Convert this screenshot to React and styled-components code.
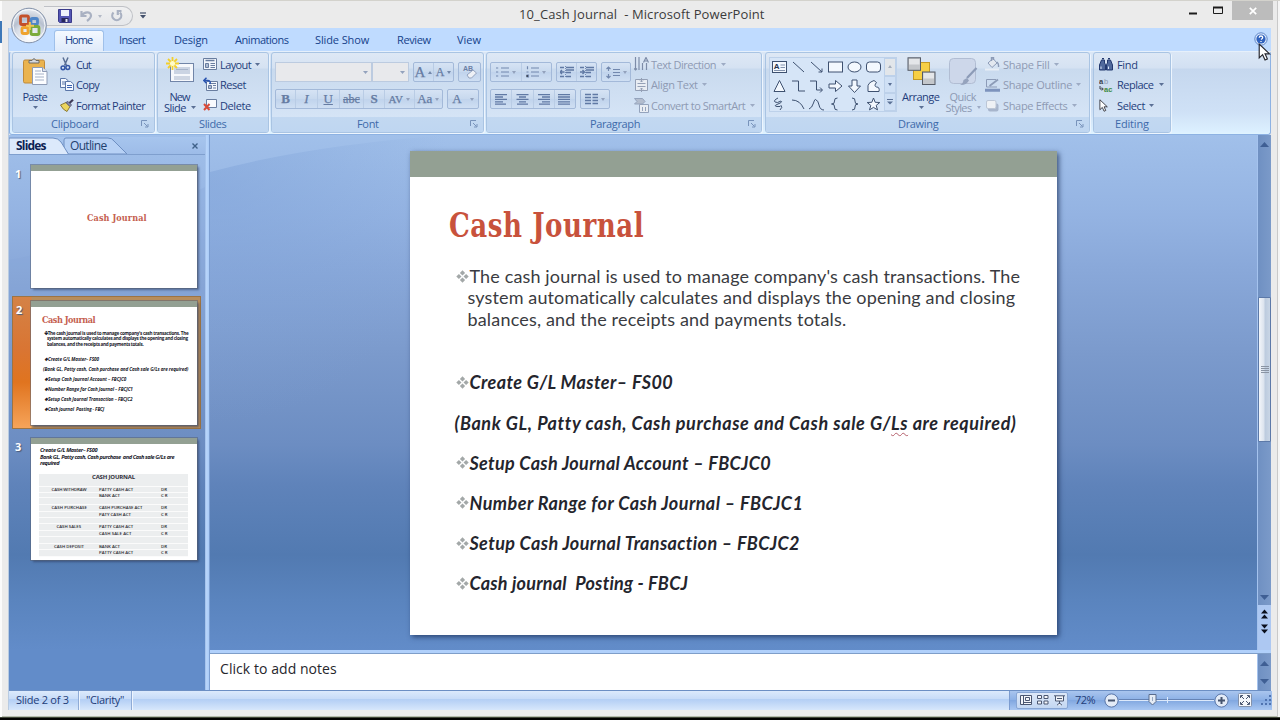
import { useLayoutEffect, useRef, useState } from "react"
import styled, { createGlobalStyle, css } from "styled-components"

const GlobalStyle = createGlobalStyle`
    * { box-sizing:border-box; }
    body {
        margin:0;
        overflow:hidden;
        background-color:#ebebeb;
        font-family:"Open Sans","Noto Sans",sans-serif;
    }
    svg { display:block; flex:none; }
`

/* ---------- text that keeps a fixed run length ---------- */
const Run = styled.span`
    display:inline-block;
    white-space:pre;
    flex:none;
`
const Fit = ({ w, children, className }) => {
    const ref = useRef(null)
    const [spacing, setSpacing] = useState(null)
    useLayoutEffect(() => {
        const el = ref.current
        const count = el.textContent.length
        setSpacing((w - el.offsetWidth) / Math.max(1, count - 1))
    }, [w])
    const style = spacing === null ? undefined : { width: w, letterSpacing: spacing }
    return <Run ref={ref} className={className} style={style}>{children}</Run>
}

/* ---------- window ---------- */
const Window = styled.div`
    position:relative;
    width:1280px;
    height:720px;
    display:flex;
    flex-direction:column;
    overflow:hidden;
    background-color:#ebebeb;
    border-top:1px solid #d3d2cc;
`
const TitleBar = styled.div`
    height:27px;
    flex:none;
    display:flex;
    align-items:flex-start;
    padding-left:44px;
`
const QuickAccess = styled.div`
    width:89px;
    height:20px;
    margin-top:5px;
    padding-left:14px;
    display:flex;
    align-items:center;
    border:1px solid #bfc1c6;
    border-left:none;
    border-radius:0 10px 10px 0;
    background:linear-gradient(#f0f0f1,#e6e7ea);
`
const Customize = styled.div`
    margin:11px 0 0 7px;
`
const Caption = styled.div`
    margin-left:373px;
    width:670px;
    font-size:13px;
    line-height:27px;
    color:#3b3b3b;
`
const WinButtons = styled.div`
    display:flex;
    align-items:flex-start;
`
const Close = styled.div`
    width:41px;
    height:19px;
    margin-left:8px;
    background-color:#bcbcbc;
    display:flex;
    align-items:center;
    justify-content:center;
`
const Orb = styled.div`
    position:absolute;
    left:11px;
    top:6px;
`
const Frame = styled.div`
    flex:none;
    height:682px;
    margin:0 9px 0 8px;
    display:flex;
    flex-direction:column;
    border-left:1px solid #b8cbe2;
`

/* ---------- ribbon ---------- */
const Tabs = styled.div`
    height:23px;
    flex:none;
    display:flex;
    padding:2px 0 0 45px;
    background-color:#bfdbff;
    font-size:11px;
    color:#15428b;
`
const Tab = styled.div`
    height:21px;
    line-height:20px;
    margin-left:${p => p.$gap}px;
    ${p => p.$active && css`
        width:50px;
        padding-left:10px;
        border:1px solid #9fc0ea;
        border-bottom:none;
        border-radius:3px 3px 0 0;
        background:linear-gradient(#f4f9ff,#dfeafa);
        line-height:18px;
    `}
`
const Help = styled.div`
    position:absolute;
    left:1254px;
    top:31px;
`
const Ribbon = styled.div`
    height:84px;
    flex:none;
    display:flex;
    gap:2px;
    padding:0 0 0 2px;
    border:1px solid #8db2e3;
    border-top-color:#e6f0fb;
    border-radius:3px;
    background:linear-gradient(#dbe7f6 0,#d2e0f2 16px,#c5d7ee 17px,#cfe1f6 60px,#dcf0ff 80px,#e0f4ff 100%);
    font-size:11px;
    color:#1e3d7b;
`
const Group = styled.div`
    width:${p => p.$w}px;
    margin-right:${p => p.$mr || 0}px;
    height:81px;
    flex:none;
    border:1px solid #a9c4e3;
    border-radius:3px;
    box-shadow:1px 1px 0 #edf5fe;
    display:flex;
    flex-direction:column;
    background:linear-gradient(#dee8f5 0,#d5e2f2 15px,#c9daee 16px,#d5e4f6 64px);
    overflow:hidden;
`
const GroupBody = styled.div`
    height:64px;
    flex:none;
    display:flex;
`
const GroupTitle = styled.div`
    height:15px;
    flex:none;
    display:flex;
    align-items:flex-start;
    justify-content:space-between;
    padding:0 5px 0 ${p => p.$x}px;
    background:linear-gradient(#c2d8f1,#bfd6f1);
    color:#3e6aaa;
    line-height:14px;
    svg { margin-top:3px; }
`
const Big = styled.div`
    width:${p => p.$w}px;
    margin-left:${p => p.$ml}px;
    padding-top:4px;
    flex:none;
    display:flex;
    flex-direction:column;
    align-items:center;
    color:${p => p.$off ? "#8c99b3" : "inherit"};
    line-height:11px;
`
const BigIcon = styled.div`
    height:34px;
`
const BigLine = styled.div`
    height:11px;
    display:flex;
    align-items:center;
    gap:4px;
`
const Column = styled.div`
    margin-left:${p => p.$ml}px;
    padding-top:1px;
    flex:none;
`
const Command = styled.div`
    height:20.5px;
    display:flex;
    align-items:center;
    color:${p => p.$off ? "#8e9ab3" : "inherit"};
`
const Slot = styled.div`
    width:${p => p.$w}px;
    flex:none;
`
const ToolRows = styled.div`
    margin-left:3px;
    padding-top:9px;
    display:flex;
    flex-direction:column;
    gap:7px;
    flex:none;
`
const ToolRow = styled.div`
    display:flex;
    height:20px;
    gap:4px;
`
const Combo = styled.div`
    width:${p => p.$w}px;
    margin-right:${p => p.$tight ? -4 : 0}px;
    height:20px;
    border:1px solid #bccbe0;
    background-color:#e8e9ec;
    display:flex;
    align-items:center;
    justify-content:flex-end;
    padding-right:3px;
`
const ToolSet = styled.div`
    width:${p => p.$w}px;
    height:20px;
    border:1px solid #a3b9d9;
    border-radius:2px;
    background:linear-gradient(#d6e3f4,#c8d9ee 48%,#c0d3ec 50%,#cfdff3);
    display:flex;
`
const Tool = styled.div`
    flex:${p => p.$grow || 1};
    display:flex;
    align-items:center;
    justify-content:center;
    gap:3px;
    font-family:"Liberation Serif",serif;
    font-size:${p => p.$size || 13}px;
    font-weight:${p => p.$plain ? 400 : 700};
    font-style:${p => p.$italic ? "italic" : "normal"};
    text-decoration:${p => p.$line || "none"};
    line-height:18px;
    color:#667ca3;
    -webkit-text-stroke:.25px #667ca3;
    & + & { border-left:1px solid #b9cce5; }
`
const Gallery = styled.div`
    width:128px;
    height:55px;
    margin:4px 0 0 3px;
    flex:none;
    display:flex;
    border:1px solid #bdd1ea;
    background-color:#d6e5f7;
`
const Shapes = styled.div`
    width:114px;
    display:grid;
    grid-template-columns:repeat(6,18.8px);
    grid-template-rows:repeat(3,18.4px);
    align-items:center;
    justify-items:center;
`
const GalleryBar = styled.div`
    width:12px;
    display:flex;
    flex-direction:column;
`
const GalleryButton = styled.div`
    flex:1;
    display:flex;
    align-items:center;
    justify-content:center;
    border:1px solid #bdd1ea;
    background-color:${p => p.$off ? "#e2e6ea" : "#cfe0f5"};
`

/* ---------- work area ---------- */
const Work = styled.div`
    height:555px;
    flex:none;
    display:flex;
`
const backdrop = "linear-gradient(#a1c0ea 0,#94b3e2 80px,#8aa9da 130px,#7b9acc 220px,#6c8dc2 310px,#5f83ba 350px,#527ab1 420px,#5a84be 465px,#628cc9 515px,#628cc9 100%)"
const Side = styled.div`
    width:196px;
    flex:none;
    padding-top:2px;
    background:${backdrop};
    position:relative;
`
const Sheen = styled.svg`
    position:absolute;
    left:0;
    top:0;
`
const SideTabs = styled.div`
    height:18px;
    display:flex;
    align-items:center;
    position:relative;
    border-bottom:1px solid #7f9fce;
    background:linear-gradient(#a7c5ee,#9dbce8);
    font-size:12px;
    color:#1b3262;
`
const SideTab = styled.div`
    position:relative;
    line-height:17px;
    margin-left:${p => p.$ml}px;
    font-weight:${p => p.$bold ? 700 : 400};
    color:${p => p.$bold ? "#0d1f52" : "#23406f"};
`
const SideClose = styled.div`
    margin-left:85px;
    position:relative;
`
const Item = styled.div`
    position:relative;
    width:189px;
    height:${p => p.$h}px;
    margin:${p => p.$mt}px 0 0 3px;
    padding-top:4px;
    display:flex;
    ${p => p.$on && css`
        border:1px solid #9d7443;
        background:linear-gradient(90deg,transparent 18px,#b78d5c 19px),linear-gradient(#d48246,#d97533 40%,#e0741f 65%,#f6a45a);
    `}
`
const Index = styled.div`
    width:${p => p.$w}px;
    padding:2px 0 0 3px;
    font-size:11px;
    line-height:13px;
    font-weight:700;
    color:#fff;
    text-shadow:1px 1px 1px #4c5b78;
`
const Thumb = styled.div`
    width:166px;
    height:${p => p.$h}px;
    background-color:#fff;
    border-top:${p => p.$bar}px solid #93a093;
    box-shadow:0 0 0 1px rgba(90,100,120,.55),2px 2px 2px rgba(40,55,90,.55);
    overflow:hidden;
`
const ThumbTitle = styled.div`
    margin:${p => p.$m};
    height:12px;
    line-height:12px;
    font-family:"DejaVu Serif Condensed","DejaVu Serif",serif;
    font-weight:700;
    font-size:9px;
    color:#c5604f;
`
const ThumbLine = styled.div`
    height:${p => p.$h}px;
    margin-left:${p => p.$x}px;
    display:flex;
    align-items:center;
    font-size:${p => p.$size || 4.6}px;
    line-height:${p => p.$h}px;
    font-weight:700;
    font-style:${p => p.$plain ? "normal" : "italic"};
    color:#20202a;
`
const MiniTable = styled.div`
    width:149px;
    margin:7px 0 0 8px;
`
const MiniRow = styled.div`
    height:${p => p.$h}px;
    display:grid;
    grid-template-columns:60px 62px 27px;
    align-items:center;
    justify-items:start;
    border-bottom:.5px solid #fbfbfb;
    background-color:#eceeef;
    font-size:4.3px;
    font-weight:600;
    line-height:5px;
    color:#26262c;
    & > *:nth-child(1) { justify-self:center; }
`
const MiniHead = styled.div`
    height:6.5px;
    display:flex;
    justify-content:center;
    align-items:center;
    background-color:#eceeef;
    font-size:6px;
    font-weight:700;
    line-height:6px;
    color:#30303a;
`
const Splitter = styled.div`
    width:5px;
    flex:none;
    background:linear-gradient(90deg,#9dbce6,#b9d5fb 40%,#a9cbf7);
    border-right:1px solid #7d9fd2;
`
const Main = styled.div`
    width:1061px;
    flex:none;
    display:flex;
    flex-direction:column;
`
const Stage = styled.div`
    position:relative;
    height:515px;
    flex:none;
    display:flex;
    background:${backdrop};
`
const Canvas = styled.div`
    width:1047px;
    padding:16px 0 0 200px;
`
const Slide = styled.div`
    position:relative;
    width:647px;
    height:484px;
    background-color:#fff;
    border-top:26px solid #93a093;
    box-shadow:2px 2px 5px rgba(20,40,80,.7);
    font-family:Lato,"Open Sans",sans-serif;
    font-size:18px;
    font-variant-ligatures:none;
    color:#3a3b41;
`
const Heading = styled.h1`
    margin:0;
    padding:28px 0 0 39px;
    height:88.5px;
    font-family:"DejaVu Serif Condensed","DejaVu Serif",serif;
    font-weight:700;
    font-size:33px;
    line-height:41px;
    color:#c8523c;
`
const Squeezed = styled.span`
    display:inline-block;
    transform:scaleX(.88);
    transform-origin:0 50%;
`
const Line = styled.div`
    height:21.6px;
    line-height:21.6px;
    margin-left:${p => p.$x}px;
    display:flex;
    align-items:center;
`
const Point = styled.div`
    height:40.2px;
    line-height:40px;
    margin-left:${p => p.$x}px;
    display:flex;
    align-items:center;
    font-weight:700;
    font-style:italic;
    color:#24252d;
`
const Points = styled.div`
    margin-top:32px;
`
const Misspelt = styled.span`
    text-decoration:underline wavy #b5606c 1px;
    text-underline-offset:2px;
    text-decoration-skip-ink:none;
`
const Scroll = styled.div`
    width:14px;
    height:${p => p.$h}px;
    flex:none;
    display:flex;
    flex-direction:column;
    align-items:center;
    border-left:1px solid #a5c3ee;
    background:linear-gradient(90deg,#6f90c2,#7b9ac9);
`
const ScrollEnd = styled.div`
    height:${p => p.$h}px;
    display:flex;
    align-items:center;
`
const ScrollThumb = styled.div`
    width:13px;
    height:145px;
    margin:${p => p.$mt}px 0 ${p => p.$mb}px;
    display:flex;
    align-items:center;
    justify-content:center;
    border:1px solid #5c79a8;
    border-radius:1px;
    background:linear-gradient(90deg,#f3f6fa,#dbe3ee 45%,#bccbde 55%,#c9d6e6);
`
const Jumps = styled.div`
    width:13px;
    flex:1;
    padding-top:4px;
    display:flex;
    flex-direction:column;
    align-items:center;
    gap:5px;
    background-color:#adc8f2;
`
const NotesSplit = styled.div`
    height:4px;
    flex:none;
    background-color:#b0d0fb;
    border-bottom:1px solid #7e9ec9;
`
const NotesRow = styled.div`
    height:36px;
    flex:none;
    display:flex;
`
const Notes = styled.div`
    width:1047px;
    padding-left:10px;
    background-color:#fff;
    font-size:14px;
    line-height:30px;
    color:#26262c;
`

/* ---------- status bar ---------- */
const Status = styled.div`
    height:20px;
    flex:none;
    display:flex;
    border-top:1px solid #6c8fc4;
    background:linear-gradient(#dceafc,#c8dcf8 40%,#b4cff5 45%,#d7e7fb);
    font-size:11px;
    line-height:18px;
    color:#233d78;
`
const Field = styled.div`
    width:${p => p.$w}px;
    flex:none;
    padding-left:7px;
    border-right:1px solid #8fabd6;
    box-shadow:1px 0 0 #edf4fe;
`
const Spacer = styled.div`
    width:${p => p.$w}px;
    flex:none;
`
const Zoom = styled.div`
    flex:1;
    display:flex;
    align-items:center;
    padding:0 0 1px 6px;
    border-left:1px solid #7c9cd0;
    background:linear-gradient(#a9c5ee,#8db1e6 45%,#82a8e0 50%,#a9c7f2);
`
const Views = styled.div`
    width:52px;
    height:17px;
    flex:none;
    display:flex;
    align-items:center;
    justify-content:space-around;
    border:1px solid #88a6d4;
    border-radius:2px;
    background:linear-gradient(#dde8f8,#c3d7f2);
`
const Bottom = styled.div`
    height:10px;
    flex:none;
    background:linear-gradient(#ebebeb 6px,#7f8b70 7px,#000 8px);
`
const LeftEdge = styled.div`
    position:absolute;
    left:0;
    top:0;
    width:2px;
    height:716px;
    background:linear-gradient(#fbfbfb 20px,#3d78b8 20px,#3d78b8 42px,#fbfbfb 42px);
`
const RightEdge = styled.div`
    position:absolute;
    right:0;
    top:0;
    width:3px;
    height:716px;
    border-left:1px solid #c9c9c9;
    background-color:#f5f5f5;
`
const Pointer = styled.div`
    position:absolute;
    left:1258px;
    top:42px;
`

/* ---------- glyphs ---------- */
const Caret = ({ c = "#5b7095", up, s = 5 }) => (
    <svg width={s} height={3} viewBox="0 0 6 3" preserveAspectRatio="none"><path d={up ? "M0 3h6L3 0z" : "M0 0h6L3 3z"} fill={c} /></svg>
)
const Arrow = ({ up }) => (
    <svg width="9" height="5" viewBox="0 0 9 5"><path d={up ? "M0 5h9L4.5 0z" : "M0 0h9L4.5 5z"} fill="#3f5f94" /></svg>
)
const Launcher = () => (
    <svg width="8" height="8" viewBox="0 0 8 8" fill="none" stroke="#7893bb">
        <path d="M.5 6V.5H6" /><path d="M3 3l3.500 3.500M7 4v3H4" />
    </svg>
)
const Jump = ({ up }) => (
    <svg width="7" height="10" viewBox="0 0 7 10" fill="#0a0f1c">
        {up ? <path d="M0 4.500h7L3.500.5zM0 9.500h7l-3.500-4z" /> : <path d="M0 .5h7L3.500 4.500zM0 5.500h7l-3.500 4z" />}
    </svg>
)
const Diamonds = () => (
    <svg width="13" height="13" viewBox="0 0 13 13" fill="#a3a8a8">
        <path d="M6.500.3l2.600 2.600-2.600 2.600L3.900 2.900zM6.500 7.500l2.600 2.600-2.600 2.600-2.600-2.600zM2.900 3.900l2.600 2.600-2.600 2.600L.3 6.500zM10.100 3.900l2.600 2.600-2.600 2.600-2.600-2.600z" />
    </svg>
)
const OfficeOrb = () => (
    <svg width="37" height="37" viewBox="0 0 37 37">
        <defs>
            <radialGradient id="orb" cx="50%" cy="85%" r="90%">
                <stop offset="0" stopColor="#ffffff" /><stop offset=".45" stopColor="#d5dbe5" /><stop offset=".6" stopColor="#b7c0cf" /><stop offset="1" stopColor="#f4f6f9" />
            </radialGradient>
        </defs>
        <circle cx="18" cy="18.500" r="17.300" fill="url(#orb)" stroke="#8391a9" />
        <circle cx="18" cy="18.500" r="16" fill="none" stroke="#f7f9fc" />
        <g fill="none" strokeWidth="2.800">
            <rect x="9.500" y="9" width="8" height="8.500" rx="1.500" stroke="#c4502a" />
            <rect x="20" y="11.500" width="6.500" height="6" rx="1.500" stroke="#4f86c8" />
            <rect x="11" y="20.500" width="6" height="6" rx="1.500" stroke="#efa32e" />
            <rect x="20" y="19.500" width="8" height="8" rx="1.500" stroke="#7cab3b" />
        </g>
        <path d="M15 18.800h8M18.800 15v8" stroke="#f5c550" strokeWidth="2" />
    </svg>
)
const SaveIcon = () => (
    <svg width="14" height="14" viewBox="0 0 14 14">
        <path d="M.5.5h13v13h-12l-1-1z" fill="#5456b4" stroke="#3a3a8a" />
        <path d="M3 1h8v6H3z" fill="#eef1fb" /><path d="M3.500 9h7v4h-7z" fill="#26265a" /><path d="M7.500 10h2v3h-2z" fill="#e4e6f5" />
    </svg>
)
const UndoIcon = () => (
    <svg width="13" height="12" viewBox="0 0 13 12" fill="none" stroke="#a9b1c2" strokeWidth="2.200">
        <path d="M1.500 1v5h5M2 5.500C4 1.500 11 1 11 5.500c0 2.500-2 4-4 5.500" />
    </svg>
)
const RedoIcon = () => (
    <svg width="12" height="12" viewBox="0 0 12 12" fill="none" stroke="#a9b1c2" strokeWidth="2.200">
        <path d="M2.500 2.500A4.500 4.500 0 1 0 9 2.500M10.500 1H6.800v4" />
    </svg>
)
const PasteIcon = () => (
    <svg width="27" height="29" viewBox="0 0 27 29">
        <rect x="1.500" y="3" width="21" height="23" rx="1.500" fill="#eab34f" stroke="#c08a3a" />
        <path d="M7 6V3.500h3Q12 0 14 3.500h3V6z" fill="#d5d9df" stroke="#6e6a63" />
        <path d="M10.500 10.500h10l4.500 4v13H10.500z" fill="#fcfdff" stroke="#8e9bb5" />
        <path d="M13 14h6M13 17h9M13 20h9M13 23h9" stroke="#a6b2c8" />
        <path d="M20.500 10.500v4H25" fill="#dbe2ee" stroke="#8e9bb5" />
    </svg>
)
const CutIcon = () => (
    <svg width="11" height="14" viewBox="0 0 11 14" fill="none">
        <path d="M3 .5l3.500 8M8 .5L4.500 8.500" stroke="#5a6f94" strokeWidth="1.500" />
        <circle cx="3" cy="10.800" r="1.900" stroke="#3457a6" strokeWidth="1.500" /><circle cx="7.800" cy="10.500" r="1.900" stroke="#3457a6" strokeWidth="1.500" />
    </svg>
)
const CopyIcon = () => (
    <svg width="14" height="13" viewBox="0 0 14 13" stroke="#5a76a8">
        <path d="M.5.5h5l2.500 2v7H.5z" fill="#f4f8ff" /><path d="M2 4h4M2 6h4" />
        <path d="M5.500 3.500h5l3 2.500v6.500h-8z" fill="#f4f8ff" /><path d="M7 7.500h5M7 9.500h5" stroke="#3b62b0" />
    </svg>
)
const PainterIcon = () => (
    <svg width="14" height="13" viewBox="0 0 14 13">
        <path d="M.5 6L6 3.500l4 4L7 12.500Q3 11 .5 6z" fill="#ecd65e" stroke="#8c7b35" />
        <path d="M6 3.500l2-1 3.500 3.500-1.500 1.500z" fill="#8d90ae" stroke="#555a7c" /><path d="M9.500 4L13 .8" stroke="#3e3c58" strokeWidth="2.200" />
    </svg>
)
const NewSlideIcon = () => (
    <svg width="28" height="27" viewBox="0 0 28 27">
        <rect x="4.500" y="6.500" width="23" height="18" fill="#f6f8fc" stroke="#7185a8" />
        <rect x="8" y="10" width="16" height="7" fill="#cbd4e3" /><path d="M10 12.500h12M8 20h16M8 22h16" stroke="#a7b4ca" />
        <path d="M6.500 0v13M0 6.500h13M2 2l9 9M11 2l-9 9" stroke="#f3cf2c" strokeWidth="1.800" /><circle cx="6.500" cy="6.500" r="2.500" fill="#fffbc8" />
    </svg>
)
const LayoutIcon = () => (
    <svg width="14" height="12" viewBox="0 0 14 12" fill="#f2f6fc" stroke="#697d9f">
        <path d="M.5.5h13v11H.5z" /><path d="M2.500 2.500h9" strokeWidth="1.500" /><path d="M2.500 5.500h3v4h-3z" fill="#aebcd4" /><path d="M7.500 5.500H12M7.500 7.500H12M7.500 9.500H12" />
    </svg>
)
const ResetIcon = () => (
    <svg width="15" height="15" viewBox="0 0 15 15" fill="none" stroke="#697d9f">
        <path d="M3.500 4.500h11v9h-11z" fill="#f2f6fc" /><path d="M5.500 8.500h3v3h-3z" fill="#aebcd4" /><path d="M10 8.500h3M10 11h3M6 6.500h7" />
        <path d="M1 3.500h3.500Q8 3.500 7 7M3.500.8L.8 3.500l2.700 2.800" stroke="#2b55b0" strokeWidth="1.500" />
    </svg>
)
const DeleteIcon = () => (
    <svg width="14" height="12" viewBox="0 0 14 12">
        <path d="M3.500.5h10v8h-10z" fill="#f8fafe" stroke="#697d9f" /><path d="M1 5l5.500 6M6.500 5L1 11" stroke="#d94a38" strokeWidth="2" />
    </svg>
)
const barWidths = { left: [12, 8, 12, 8, 11], center: [12, 7, 12, 7, 11], right: [12, 8, 12, 8, 11], full: [12, 12, 12, 12, 12] }
const Bars = ({ kind }) => (
    <svg width="13" height="11" viewBox="0 0 13 11">
        {barWidths[kind].map((n, i) => {
            const x = kind === "right" ? 13 - n : kind === "center" ? (13 - n) / 2 : 0
            return <path key={i} d={`M${x} ${i * 2.4 + .6}h${n}`} stroke="#6079a4" strokeWidth="1.300" />
        })}
    </svg>
)
const ListIcon = ({ dots }) => (
    <svg width="13" height="12" viewBox="0 0 13 12" stroke="#7288ae" strokeWidth="1.200">
        <path d="M5 2h8M5 6h8M5 10h8" />
        <path d={dots ? "M0 2h2.200M0 6h2.200M0 10h2.200" : "M1.500.3v3M.5 6h2M.5 9h2v2h-2"} />
    </svg>
)
const IndentIcon = ({ back }) => (
    <svg width="14" height="12" viewBox="0 0 14 12" stroke="#6079a4" strokeWidth="1.400" fill="none">
        <path d="M6 1.500h8M6 4h8M6 6.500h5M0 1.500h4M0 10.500h4M6 10.500h5" />
        <path d={back ? "M4.500 6H0M2 4L0 6l2 2" : "M0 6h4.500M2.500 4l2 2-2 2"} /><path d="M5.500 0v12" strokeWidth=".8" strokeDasharray="1 1" />
    </svg>
)
const SpacingIcon = () => (
    <svg width="14" height="13" viewBox="0 0 14 13" stroke="#7288ae" strokeWidth="1.200" fill="none">
        <path d="M2.500 1v4M.5 3l2-2 2 2M2.500 8v4M.5 10l2 2 2-2M7 3.500h7M7 6.500h7M7 9.500h7" />
    </svg>
)
const ColumnsIcon = () => (
    <svg width="13" height="12" viewBox="0 0 13 12" stroke="#6079a4" strokeWidth="1.700">
        <path d="M0 1.500h6M0 4.500h6M0 7.500h6M0 10.500h6M7.500 1.500h5.500M7.500 4.500h5.500M7.500 7.500h5.500M7.500 10.500h5.500" />
    </svg>
)
const ClearIcon = () => (
    <svg width="16" height="16" viewBox="0 0 16 16">
        <text x="1" y="7" fontSize="7" fontFamily="Liberation Sans" fill="#6c80a5">AB</text>
        <path d="M5 11l6-5 3.500 3-5 5H7z" fill="#eef1f6" stroke="#94a3be" />
    </svg>
)
const DirectionIcon = () => (
    <svg width="15" height="14" viewBox="0 0 15 14" fill="none" stroke="#7d8ca8" strokeWidth="1.200">
        <path d="M1.500 0v13M5 0v13M8.500 6v7M12.500 6v7M0 11.500L1.500 13 3 11.500M9.500 5.500L12 .5l2.500 5M10.500 4h3" />
    </svg>
)
const AlignTextIcon = () => (
    <svg width="15" height="14" viewBox="0 0 15 14" fill="none" stroke="#94a0b6">
        <path d="M1.500 1.500h12v11h-12z" fill="#e9edf3" /><path d="M3.500 5.500h8M3.500 8.500h8M7.500 0v4M6 2.500L7.500 4 9 2.500M7.500 14v-4M6 11.500L7.500 10 9 11.500" />
    </svg>
)
const SmartIcon = () => (
    <svg width="15" height="15" viewBox="0 0 15 15" fill="#b3bdce" stroke="#94a3bc">
        <path d="M.5.500h8l2.500 3-2.500 2.500H.5l2.500-2.500z" /><path d="M5.500 6.500h9v8h-9z" fill="#e9edf3" /><path d="M8.500 9v4M11.500 9v4" />
    </svg>
)
const ArrangeIcon = () => (
    <svg width="29" height="29" viewBox="0 0 29 29">
        <rect x="6.500" y="5.500" width="16" height="17" fill="#f7cf44" stroke="#c59a24" />
        <rect x="1" y=".8" width="12.500" height="12.500" fill="#c4c7cb" stroke="#555b66" /><path d="M2 2h10.500v5.500H2z" fill="#e4e6e9" />
        <rect x="15.500" y="15" width="12.500" height="12.500" fill="#c4c7cb" stroke="#555b66" /><path d="M16.500 16h10.500v5.500H16.500z" fill="#e4e6e9" />
    </svg>
)
const StylesIcon = () => (
    <svg width="30" height="30" viewBox="0 0 30 30">
        <rect x="1.500" y="1.500" width="26" height="25" rx="4" fill="#cdd7ea" stroke="#b1bdd3" />
        <path d="M28.500 11L19 21" stroke="#8c9bb7" strokeWidth="2.200" /><path d="M12 28q3-1 3.500-5l3.500-2 2 2.500Q18 28.500 12 28z" fill="#95a3bd" />
    </svg>
)
const FillIcon = () => (
    <svg width="15" height="14" viewBox="0 0 15 14" fill="#e3e8f0" stroke="#8c9bb7">
        <path d="M3 6l5-4.500L12 6l-5 4.500z" /><path d="M6.500 4V.5h2V3M12 5q2 2 1.500 5" fill="none" strokeWidth="1.400" /><path d="M0 11.500h14v2H0z" fill="#e8edf5" stroke="none" />
    </svg>
)
const OutlineIcon = () => (
    <svg width="15" height="14" viewBox="0 0 15 14" fill="none" stroke="#8c9bb7">
        <path d="M11 1.500H1.500V9H12" /><path d="M4.500 8L13 1.500" strokeWidth="1.800" /><path d="M0 12.200h15" strokeWidth="3" stroke="#7d93bd" />
    </svg>
)
const EffectsIcon = () => (
    <svg width="14" height="13" viewBox="0 0 14 13">
        <rect x="3" y="4.500" width="10.500" height="8" rx="2" fill="#a7b5cc" /><rect x="1.500" y="1.500" width="9.500" height="8" rx="1.500" fill="#eef1f5" stroke="#bcc6d6" />
    </svg>
)
const FindIcon = () => (
    <svg width="14" height="13" viewBox="0 0 14 13" fill="#50699c" stroke="#22386e">
        <path d="M2.500 2h3v3l1 1.500v5.500h-6V7zM8.500 2h3l2 5v5h-6V6.500l1-1.500z" /><path d="M3 .5h2M9 .5h2" strokeWidth="1.500" /><path d="M2 8.500v2.500M9.500 8.500v2.500" stroke="#dbe6f8" />
    </svg>
)
const ReplaceIcon = () => (
    <svg width="15" height="16" viewBox="0 0 15 16" fontFamily="Liberation Sans" fontWeight="700" fontSize="7.500">
        <text x="0" y="6.500" fill="#3b3f4c">a</text><text x="5" y="6.500" fill="#8d98ad" fontWeight="400">b</text><text x="5" y="15" fill="#3d8a3f">ac</text>
        <path d="M1 9v3h3M2.800 10.500L4.300 12l-1.500 1.500" fill="none" stroke="#3b3f4c" />
    </svg>
)
const CursorShape = ({ h = 12 }) => (
    <svg width={h * .7} height={h} viewBox="0 0 11 17"><path d="M.7 1v13l3.200-3 2.300 5 2.200-1-2.200-4.800h4.200z" fill="#fff" stroke="#26262e" strokeWidth="1.100" /></svg>
)
const HelpIcon = () => (
    <svg width="14" height="14" viewBox="0 0 14 14">
        <circle cx="7" cy="7" r="6.200" fill="#dce9fb" stroke="#5f86c8" /><circle cx="7" cy="7" r="4.600" fill="#3062bd" />
        <path d="M5.200 5.700Q5.300 4 7 4t1.700 1.500Q8.700 6.500 7 7.500M7 9v1" fill="none" stroke="#fff" strokeWidth="1.300" />
    </svg>
)

const shapePaths = [
    "text", "M2 2l11 10", "M2 2l11 10M13 8.500V12H9.500", "rect", "oval", "round",
    "M7.500 1.500l5.500 11H2z", "M1 2h6.500v10H14", "M1 2h6.500v9H13M11 8.500l2.500 2.500L11 13.500", "M1 5h6.500V1.500L14 7l-6.500 5.500V9H1z", "M5 1h5v6h3.500l-6 6.500-6-6.500H5z", "M8 1.500Q1 4 2 9v3.500h11Q14 8 10.500 8q-3-1 0-4.500z",
    "M6 1Q1 3.500 3 5t6-1Q11 5 6 7T5 9.500t4-1Q11 10 8 13", "M1 3q8 0 12 9", "M0 12q3-1 4.500-6T7 3q2 0 3 5t5 5", "M9.500 1Q6 1 6.500 4T3.500 7Q7 7 6.500 10T9.500 13", "M5 1q3.500 0 3 3t3 3q-3.500 0-3 3t-3 3", "M7.500 1l1.700 4.300 4.600.2-3.600 2.900 1.300 4.500-4-2.500-4 2.500 1.300-4.500L1.200 5.500l4.600-.2z",
]
const ShapeIcon = ({ d, fill }) => (
    <svg width="15" height="14" viewBox="0 0 15 14" fill={fill ? "#f3f8fe" : "none"} stroke="#3e5170">
        {d === "text" ? <><rect x=".5" y="1.500" width="14" height="11" /><text x="1.800" y="9" fontSize="8" fontWeight="700" fontFamily="Liberation Sans" fill="#26334d" stroke="none">A</text><path d="M8.500 5H13M8.500 7.500H13M2 10.500h11" stroke="#8292ad" /></>
            : d === "rect" ? <rect x=".5" y="2" width="14" height="10" />
            : d === "oval" ? <ellipse cx="7.500" cy="7" rx="6.500" ry="5" />
            : d === "round" ? <rect x=".5" y="2" width="14" height="10" rx="3" />
            : <path d={d} />}
    </svg>
)
const filled = [0, 3, 4, 5, 6, 9, 10, 11, 17]

/* ---------- data ---------- */
const tabs = [["Insert", 27, 15], ["Design", 34, 28], ["Animations", 54, 27], ["Slide Show", 54, 26], ["Review", 34, 28], ["View", 24, 26]]
const paragraph = [
    ["The cash journal is used to manage company's cash transactions. The", 550],
    ["system automatically calculates and displays the opening and closing", 548],
    ["balances, and the receipts and payments totals.", 379],
]
const points = [
    ["Create G/L Master– FS00", 203, 51],
    [null, 561, 145],
    ["Setup Cash Journal Account – FBCJC0", 301, 78],
    ["Number Range for Cash Journal – FBCJC1", 333, 85],
    ["Setup Cash Journal Transaction – FBCJC2", 330, 85],
    ["Cash journal  Posting - FBCJ", 218, 56],
]
const ledger = [
    [7],
    [5.5, "CASH WITHDRAW", 35, "PATTY CASH ACT", 34, "DR"],
    [5, "", 0, "BANK ACT", 21, "CR"],
    [7.5],
    [6.5, "CASH PURCHASE", 35, "CASH PURCHASE ACT", 44, "DR"],
    [6.5, "", 0, "PATY CASH ACT", 32, "CR"],
    [6.2],
    [6.4, "CASH SALES", 25, "PATTY CASH ACT", 34, "DR"],
    [6, "", 0, "CASH SALE ACT", 32, "CR"],
    [7.2],
    [6.4, "CASH DEPOSIT", 30, "BANK ACT", 21, "DR"],
    [6.5, "", 0, "PATTY CASH ACT", 34, "CR"],
]

const Cmd = ({ icon, slot, w, caret, off, children }) => (
    <Command $off={off}>
        <Slot $w={slot}>{icon}</Slot>
        <Fit w={w}>{children}</Fit>
        {caret && <><Spacer $w={caret} /><Caret c={off ? "#9dabc4" : undefined} /></>}
    </Command>
)

const RibbonBar = () => (
    <Ribbon>
        <Group $w={143}>
            <GroupBody>
                <Big $w={28} $ml={8}>
                    <BigIcon><PasteIcon /></BigIcon>
                    <BigLine><Fit w={25}>Paste</Fit></BigLine>
                    <BigLine><Caret /></BigLine>
                </Big>
                <Column $ml={11}>
                    <Cmd icon={<CutIcon />} slot={16} w={16}>Cut</Cmd>
                    <Cmd icon={<CopyIcon />} slot={16} w={24}>Copy</Cmd>
                    <Cmd icon={<PainterIcon />} slot={16} w={70}>Format Painter</Cmd>
                </Column>
            </GroupBody>
            <GroupTitle $x={38}><Fit w={48}>Clipboard</Fit><Launcher /></GroupTitle>
        </Group>
        <Group $w={112}>
            <GroupBody>
                <Big $w={32} $ml={6}>
                    <BigIcon><NewSlideIcon /></BigIcon>
                    <BigLine><Fit w={21}>New</Fit></BigLine>
                    <BigLine><Fit w={23}>Slide</Fit><Caret /></BigLine>
                </Big>
                <Column $ml={7}>
                    <Cmd icon={<LayoutIcon />} slot={17} w={32} caret={3}>Layout</Cmd>
                    <Cmd icon={<ResetIcon />} slot={17} w={26}>Reset</Cmd>
                    <Cmd icon={<DeleteIcon />} slot={17} w={31}>Delete</Cmd>
                </Column>
            </GroupBody>
            <GroupTitle $x={41}><Fit w={28}>Slides</Fit></GroupTitle>
        </Group>
        <Group $w={213}>
            <GroupBody>
                <ToolRows>
                    <ToolRow>
                        <Combo $w={97} $tight><Caret c="#93a2bd" /></Combo>
                        <Combo $w={37}><Caret c="#93a2bd" /></Combo>
                        <ToolSet $w={41}>
                            <Tool $size={15} $plain>A<Caret up c="#7388ab" s={4} /></Tool>
                            <Tool $size={12} $plain>A<Caret c="#7388ab" s={4} /></Tool>
                        </ToolSet>
                        <ToolSet $w={23}><Tool><ClearIcon /></Tool></ToolSet>
                    </ToolRow>
                    <ToolRow>
                        <ToolSet $w={168}>
                            <Tool $grow={20}>B</Tool>
                            <Tool $grow={22} $italic $plain>I</Tool>
                            <Tool $grow={22} $line="underline" $plain>U</Tool>
                            <Tool $grow={25} $line="line-through" $plain $size={12}>abc</Tool>
                            <Tool $grow={21}>S</Tool>
                            <Tool $grow={30} $plain $size={11}>AV<Caret c="#93a2bd" s={4} /></Tool>
                            <Tool $grow={29} $plain>Aa<Caret c="#93a2bd" s={4} /></Tool>
                        </ToolSet>
                        <ToolSet $w={32}><Tool $plain>A<Spacer $w={2} /><Caret c="#93a2bd" s={4} /></Tool></ToolSet>
                    </ToolRow>
                </ToolRows>
            </GroupBody>
            <GroupTitle $x={85}><Fit w={22}>Font</Fit><Launcher /></GroupTitle>
        </Group>
        <Group $w={276} $mr={1}>
            <GroupBody>
                <ToolRows>
                    <ToolRow>
                        <ToolSet $w={62}>
                            <Tool><ListIcon dots /><Caret c="#93a2bd" s={4} /></Tool>
                            <Tool><ListIcon /><Caret c="#93a2bd" s={4} /></Tool>
                        </ToolSet>
                        <ToolSet $w={41}><Tool><IndentIcon back /></Tool><Tool><IndentIcon /></Tool></ToolSet>
                        <ToolSet $w={30}><Tool><SpacingIcon /><Caret c="#93a2bd" s={4} /></Tool></ToolSet>
                    </ToolRow>
                    <ToolRow>
                        <ToolSet $w={86}>
                            {["left", "center", "right", "full"].map(k => <Tool key={k}><Bars kind={k} /></Tool>)}
                        </ToolSet>
                        <ToolSet $w={30}><Tool><ColumnsIcon /><Caret c="#93a2bd" s={4} /></Tool></ToolSet>
                    </ToolRow>
                </ToolRows>
                <Column $ml={3}>
                    <Cmd off icon={<DirectionIcon />} slot={17} w={66} caret={4}>Text Direction</Cmd>
                    <Cmd off icon={<AlignTextIcon />} slot={17} w={47} caret={4}>Align Text</Cmd>
                    <Cmd off icon={<SmartIcon />} slot={17} w={95} caret={4}>Convert to SmartArt</Cmd>
                </Column>
            </GroupBody>
            <GroupTitle $x={103}><Fit w={50}>Paragraph</Fit><Launcher /></GroupTitle>
        </Group>
        <Group $w={325} $mr={1}>
            <GroupBody>
                <Gallery>
                    <Shapes>{shapePaths.map((d, i) => <ShapeIcon key={i} d={d} fill={filled.includes(i)} />)}</Shapes>
                    <GalleryBar>
                        <GalleryButton $off><Caret up c="#a5aebb" s={4} /></GalleryButton>
                        <GalleryButton><Caret s={4} /></GalleryButton>
                        <GalleryButton><svg width="6" height="6" viewBox="0 0 6 6"><path d="M0 .5h6" stroke="#5b7095" /><path d="M0 2.500h6L3 5.500z" fill="#5b7095" /></svg></GalleryButton>
                    </GalleryBar>
                </Gallery>
                <Big $w={40} $ml={4}>
                    <BigIcon><ArrangeIcon /></BigIcon>
                    <BigLine><Fit w={38}>Arrange</Fit></BigLine>
                    <BigLine><Caret /></BigLine>
                </Big>
                <Big $w={36} $ml={4} $off>
                    <BigIcon><StylesIcon /></BigIcon>
                    <BigLine><Fit w={27}>Quick</Fit></BigLine>
                    <BigLine><Fit w={27}>Styles</Fit><Caret c="#9dabc4" s={4} /></BigLine>
                </Big>
                <Column $ml={4}>
                    <Cmd off icon={<FillIcon />} slot={18} w={47} caret={4}>Shape Fill</Cmd>
                    <Cmd off icon={<OutlineIcon />} slot={18} w={69} caret={4}>Shape Outline</Cmd>
                    <Cmd off icon={<EffectsIcon />} slot={18} w={65} caret={4}>Shape Effects</Cmd>
                </Column>
            </GroupBody>
            <GroupTitle $x={132}><Fit w={41}>Drawing</Fit><Launcher /></GroupTitle>
        </Group>
        <Group $w={78}>
            <GroupBody>
                <Column $ml={5}>
                    <Cmd icon={<FindIcon />} slot={18} w={21}>Find</Cmd>
                    <Cmd icon={<ReplaceIcon />} slot={18} w={37} caret={5}>Replace</Cmd>
                    <Cmd icon={<Slot $w={12}><CursorShape h={13} /></Slot>} slot={18} w={28} caret={4}>Select</Cmd>
                </Column>
            </GroupBody>
            <GroupTitle $x={21}><Fit w={34}>Editing</Fit></GroupTitle>
        </Group>
    </Ribbon>
)

const SidePane = () => (
    <Side>
        <Sheen width="196" height="160" viewBox="0 0 196 160"><path d="M0 125Q80 112 196 52V160H0z" fill="#86a6d8" opacity=".22" /></Sheen>
        <SideTabs>
            <Sheen width="196" height="17" viewBox="0 0 196 17">
                <path d="M55 17V3q0-2 2-2h42q4 0 6 3l13 13z" fill="#b7d1f5" stroke="#6e8fc2" />
                <path d="M0 18V1h44q5 0 8 4l8 13z" fill="#dce9fb" stroke="#6e8fc2" />
            </Sheen>
            <SideTab $ml={7} $bold><Fit w={31}>Slides</Fit></SideTab>
            <SideTab $ml={23}><Fit w={37}>Outline</Fit></SideTab>
            <SideClose><svg width="6" height="6" viewBox="0 0 6 6"><path d="M.5.5l5 5M5.500.5l-5 5" stroke="#3f6189" strokeWidth="1.400" /></svg></SideClose>
        </SideTabs>
        <Item $h={131} $mt={6}>
            <Index $w={19}>1</Index>
            <Thumb $h={123} $bar={6}>
                <ThumbTitle $m="41px 0 0 56px"><Fit w={60}>Cash Journal</Fit></ThumbTitle>
            </Thumb>
        </Item>
        <Item $h={133} $mt={4} $on>
            <Index $w={18}>2</Index>
            <Thumb $h={124} $bar={6}>
                <ThumbTitle $m="7px 0 5px 11px"><Fit w={54}>Cash Journal</Fit></ThumbTitle>
                <ThumbLine $h={5.3} $x={13} $plain><Fit w={145}>{"❖" + paragraph[0][0]}</Fit></ThumbLine>
                <ThumbLine $h={5.3} $x={16} $plain><Fit w={141}>{paragraph[1][0]}</Fit></ThumbLine>
                <ThumbLine $h={5.3} $x={16} $plain><Fit w={97}>{paragraph[2][0]}</Fit></ThumbLine>
                <ThumbLine $h={8.2} $x={13} />
                {points.map(([t, , w], i) => (
                    <ThumbLine key={i} $h={9.9} $x={t ? 13 : 12}>
                        <Fit w={t ? w + 4 : w}>{t ? "❖" + t : "(Bank GL, Patty cash, Cash purchase and Cash sale G/Ls are required)"}</Fit>
                    </ThumbLine>
                ))}
            </Thumb>
        </Item>
        <Item $h={130} $mt={5}>
            <Index $w={19}>3</Index>
            <Thumb $h={122} $bar={6}>
                <ThumbLine $h={3} $x={9} />
                <ThumbLine $h={6.5} $x={9} $size={5.6}><Fit w={58}>Create G/L Master– FS00</Fit></ThumbLine>
                <ThumbLine $h={6.5} $x={9} $size={5.6}><Fit w={135}>Bank GL, Patty cash, Cash purchase  and Cash sale G/Ls are</Fit></ThumbLine>
                <ThumbLine $h={6.5} $x={9} $size={5.6}><Fit w={20}>required</Fit></ThumbLine>
                <MiniTable>
                    <MiniHead><Fit w={43}>CASH JOURNAL</Fit></MiniHead>
                    {ledger.map(([h, a, aw, b, bw, side], i) => (
                        <MiniRow key={i} $h={h}>
                            {b && <>
                                {a ? <Fit w={aw}>{a}</Fit> : <span />}
                                <Fit w={bw}>{b}</Fit>
                                <Fit w={6}>{side}</Fit>
                            </>}
                        </MiniRow>
                    ))}
                </MiniTable>
            </Thumb>
        </Item>
    </Side>
)

const SlideView = () => (
    <Slide>
        <Heading><Squeezed><Fit w={221.5}>Cash Journal</Fit></Squeezed></Heading>
        {paragraph.map(([t, w], i) => (
            <Line key={i} $x={i ? 57.5 : 45.5}>
                {i === 0 && <Slot $w={14}><Diamonds /></Slot>}
                <Fit w={w}>{t}</Fit>
            </Line>
        ))}
        <Points>
            {points.map(([t, w], i) => (
                <Point key={i} $x={t ? 45.5 : 44.5}>
                    {t && <Slot $w={14}><Diamonds /></Slot>}
                    {t ? <Fit w={w}>{t}</Fit> : <Fit w={w}>(Bank GL, Patty cash, Cash purchase and Cash sale G/<Misspelt>Ls</Misspelt> are required)</Fit>}
                </Point>
            ))}
        </Points>
    </Slide>
)

const ViewIcons = () => (
    <Views>
        <svg width="12" height="10" viewBox="0 0 12 10" fill="#f4f6fa" stroke="#4b5771"><path d="M.5.5h11v9H.5zM3.500.5v9M5.500 2.500h4v3h-4zM3.500 7.500h8" /></svg>
        <svg width="12" height="10" viewBox="0 0 12 10" fill="#f4f6fa" stroke="#4b5771"><path d="M.5.5h4v3h-4zM7 .5h4v3H7zM.5 6h4v3h-4zM7 6h4v3H7z" /></svg>
        <svg width="11" height="11" viewBox="0 0 11 11" fill="#f4f6fa" stroke="#4b5771"><path d="M0 .8h11M1.500 1v5h8V1M5.500 6v3M3 10.200L5.500 8 8 10.200" /><path d="M3 3.500h5" /></svg>
    </Views>
)
const RoundButton = ({ plus }) => (
    <svg width="15" height="15" viewBox="0 0 15 15">
        <circle cx="7.500" cy="7.500" r="6.600" fill="#e3ebf7" stroke="#5a76a8" /><path d={plus ? "M4 7.500h7M7.500 4v7" : "M4 7.500h7"} stroke="#46546e" strokeWidth="2" />
    </svg>
)

const StatusBar = () => (
    <Status>
        <Field $w={70}><Fit w={53}>Slide 2 of 3</Fit></Field>
        <Field $w={53}><Fit w={38}>"Clarity"</Fit></Field>
        <Spacer $w={877} />
        <Zoom>
            <ViewIcons />
            <Spacer $w={7} />
            <Fit w={21}>72%</Fit>
            <Spacer $w={8} />
            <RoundButton />
            <svg width="95" height="14" viewBox="0 0 95 14">
                <path d="M0 7.500h95" stroke="#dce9fb" /><path d="M0 6.500h95" stroke="#6583b5" /><path d="M48.500 4v6" stroke="#dce9fb" />
                <path d="M30 1.500h7v7L33.500 12 30 8.500z" fill="#e6ecf5" stroke="#5a6c8d" /><path d="M33.500 4v4" stroke="#9aa9c2" />
            </svg>
            <RoundButton plus />
            <Spacer $w={9} />
            <svg width="14" height="14" viewBox="0 0 14 14"><rect x=".5" y=".5" width="13" height="13" rx="1" fill="#f4f6fa" stroke="#8291ab" /><path d="M2.500 5V2.500H5M9 2.500h2.500V5M11.500 9v2.500H9M5 11.500H2.500V9M3 3l3 3M11 3L8 6M11 11L8 8M3 11l3-3" stroke="#4b5771" fill="none" /></svg>
            <Spacer $w={9} />
            <svg width="11" height="11" viewBox="0 0 11 11" fill="#4f73b0"><path d="M8 0h2v2H8zM8 4h2v2H8zM8 8h2v2H8zM4 4h2v2H4zM4 8h2v2H4zM0 8h2v2H0z" /></svg>
        </Zoom>
    </Status>
)

const App = () => {
    return (
        <Window>
            <GlobalStyle />
            <TitleBar>
                <QuickAccess>
                    <SaveIcon /><Spacer $w={8} /><UndoIcon /><Spacer $w={5} /><Caret c="#b3b9c6" s={4} /><Spacer $w={9} /><RedoIcon />
                </QuickAccess>
                <Customize>
                    <svg width="6" height="7" viewBox="0 0 6 7"><path d="M0 1h6" stroke="#43506b" strokeWidth="1.200" /><path d="M0 3h6L3 6.500z" fill="#43506b" /></svg>
                </Customize>
                <Caption><Fit w={246}>10_Cash Journal  - Microsoft PowerPoint</Fit></Caption>
                <WinButtons>
                    <svg width="35" height="18" viewBox="0 0 35 18" fill="none" stroke="#1c1c1c"><path d="M0 12.500h8" strokeWidth="2" /><path d="M24.500 6.500h9v6h-9z" /><path d="M24 6.500h10" strokeWidth="2" /></svg>
                    <Close><svg width="8" height="8" viewBox="0 0 8 8"><path d="M.8.8l6.400 6.400M7.200.8L.8 7.200" stroke="#fff" strokeWidth="1.700" /></svg></Close>
                </WinButtons>
            </TitleBar>
            <Frame>
                <Tabs>
                    <Tab $gap={0} $active><Fit w={28}>Home</Fit></Tab>
                    {tabs.map(([t, w, gap]) => <Tab key={t} $gap={gap}><Fit w={w}>{t}</Fit></Tab>)}
                </Tabs>
                <RibbonBar />
                <Work>
                    <SidePane />
                    <Splitter />
                    <Main>
                        <Stage>
                            <Sheen width="400" height="300" viewBox="0 0 400 300">
                                <defs>
                                    <radialGradient id="sheen" gradientUnits="userSpaceOnUse" cx="0" cy="50" r="240">
                                        <stop offset="0" stopColor="#7ea2d8" stopOpacity=".5" /><stop offset="1" stopColor="#7ea2d8" stopOpacity="0" />
                                    </radialGradient>
                                </defs>
                                <path d="M0 37Q100 10 240 0H400V300H0z" fill="url(#sheen)" />
                            </Sheen>
                            <Canvas><SlideView /></Canvas>
                            <Scroll $h={515}>
                                <ScrollEnd $h={18}><Arrow up /></ScrollEnd>
                                <ScrollThumb $mt={144} $mb={147} >
                                    <svg width="8" height="7" viewBox="0 0 8 7"><path d="M0 .5h8M0 2.500h8M0 4.500h8M0 6.500h8" stroke="#8a94a3" /></svg>
                                </ScrollThumb>
                                <ScrollEnd $h={16}><Arrow /></ScrollEnd>
                                <Jumps><Jump up /><Jump /></Jumps>
                            </Scroll>
                        </Stage>
                        <NotesSplit />
                        <NotesRow>
                            <Notes><Fit w={117}>Click to add notes</Fit></Notes>
                            <Scroll $h={36}>
                                <ScrollEnd $h={18}><Arrow up /></ScrollEnd>
                                <ScrollEnd $h={18}><Arrow /></ScrollEnd>
                            </Scroll>
                        </NotesRow>
                    </Main>
                </Work>
                <StatusBar />
            </Frame>
            <Bottom />
            <LeftEdge />
            <RightEdge />
            <Orb><OfficeOrb /></Orb>
            <Help><HelpIcon /></Help>
            <Pointer><CursorShape h={18} /></Pointer>
        </Window>
    )
}

export default App
